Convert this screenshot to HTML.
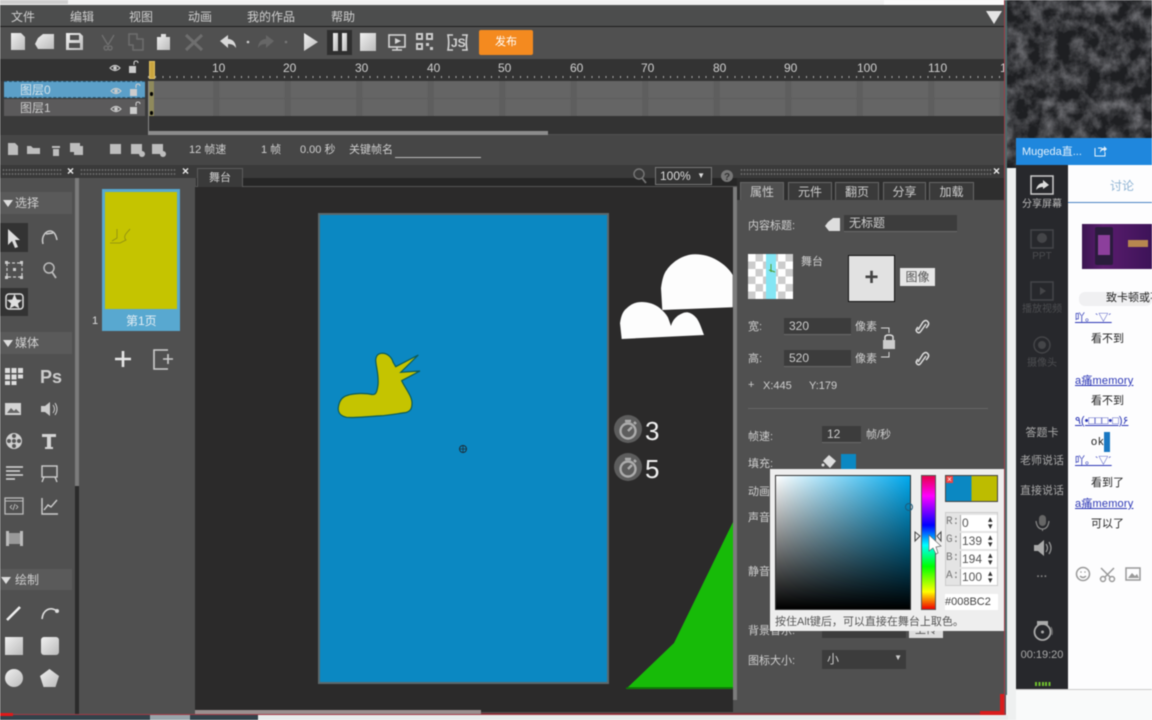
<!DOCTYPE html>
<html><head><meta charset="utf-8">
<style>
html,body{margin:0;padding:0;width:1152px;height:720px;overflow:hidden;background:#f9fafa}
#w{position:relative;width:1152px;height:720px;overflow:hidden;filter:blur(.5px);font-family:"Liberation Sans","Noto Sans CJK SC",sans-serif;font-size:12px;color:#cfcfcf}
.b{position:absolute}
.t{position:absolute;white-space:nowrap;line-height:14px}
.inp{position:absolute;background:#3c3c3c;color:#ccc;border-bottom:1px solid #6a6a6a;box-sizing:border-box;padding-left:5px;font-size:12px;line-height:16px}
.tab{position:absolute;top:182px;height:18px;border:1px solid #666;border-bottom:0;box-sizing:border-box;text-align:center;line-height:18px;font-size:12px;background:#3a3a3a;color:#ccc}
.dots{position:absolute;height:8px;background-image:radial-gradient(#6c6c6c 35%,transparent 40%);background-size:3px 4px}
.lk{color:#2a35b5;text-decoration:underline;font-size:11px}
.k{color:#222;font-size:11px}
.sd{color:#bbb;font-size:11px;text-align:center;width:60px}
.rgb{position:absolute;left:946px;width:14px;font:11px "Liberation Mono",monospace;color:#777}
.rv{position:absolute;left:960px;width:37px;height:16px;background:#fff;color:#555;font-size:12px;line-height:16px;padding-left:1px;box-sizing:border-box;border-left:1px solid #aaa}
svg{position:absolute;left:0;top:0}
</style></head><body><div id="w">

<!-- rocky bg -->
<svg width="1152" height="720" style="z-index:0"><defs><filter id="n" x="0" y="0" width="100%" height="100%"><feTurbulence type="fractalNoise" baseFrequency=".07" numOctaves="4" seed="4"/><feColorMatrix values="0 0 0 0 .42  0 0 0 0 .42  0 0 0 0 .45  1.1 0 0 0 -.38"/></filter></defs>
<rect x="1005" y="0" width="147" height="170" fill="#1e1f22"/><rect x="1005" y="0" width="147" height="170" filter="url(#n)"/></svg>

<!-- main window -->
<div class="b" style="left:0;top:0;width:1006px;height:716px;background:#505050"></div>
<div class="b" style="left:0;top:0;width:1006px;height:5px;background:#f1f1f1"></div>
<div class="b" style="left:0;top:0;width:68px;height:4px;background:#cfcfcf"></div>
<div class="b" style="left:884px;top:0;width:122px;height:5px;background:#fbfbfb"></div>
<div class="b" style="left:0;top:5px;width:1006px;height:21px;background:#4c4d4d"></div>
<div class="b" style="left:0;top:26px;width:1006px;height:1px;background:#1e1e1e"></div>
<div class="b" style="left:0;top:27px;width:1006px;height:32px;background:#505050"></div>
<div class="t" style="left:11px;top:10px">文件</div>
<div class="t" style="left:70px;top:10px">编辑</div>
<div class="t" style="left:129px;top:10px">视图</div>
<div class="t" style="left:188px;top:10px">动画</div>
<div class="t" style="left:247px;top:10px">我的作品</div>
<div class="t" style="left:331px;top:10px">帮助</div>

<!-- timeline -->
<div class="b" style="left:0;top:59px;width:1006px;height:22px;background:#333"></div>
<div class="b" style="left:148px;top:76px;width:856px;height:2px;background:repeating-linear-gradient(90deg,#aaa 0 1px,transparent 1px 7.15px)"></div>
<div class="b" style="left:0;top:81px;width:148px;height:54px;background:#3a3a3a"></div>
<div class="b" style="left:4px;top:81px;width:141px;height:17px;background:#5b9fc8;border-top:1px dashed #2b5d7b;border-bottom:1px dashed #2b5d7b;box-sizing:border-box"></div>
<div class="b" style="left:4px;top:99px;width:141px;height:17px;background:#5b5a5b"></div>
<div class="b" style="left:148px;top:81px;width:858px;height:35px;background:repeating-linear-gradient(90deg,#656565 0 65px,#5e5e5e 65px 71.5px)"></div>
<div class="b" style="left:148px;top:98px;width:858px;height:1px;background:#5d5d5d"></div>
<div class="b" style="left:148px;top:116px;width:858px;height:18px;background:#333"></div>
<div class="b" style="left:148px;top:81px;width:1px;height:54px;background:#888"></div>
<div class="b" style="left:149px;top:81px;width:5px;height:35px;background:#8f8a5c"></div>
<div class="b" style="left:149px;top:61px;width:6px;height:18px;background:#c9a53f;border:1px solid #e0c060;box-sizing:border-box"></div>
<div class="b" style="left:150px;top:92px;width:3px;height:4px;background:#000;border-radius:2px"></div>
<div class="b" style="left:150px;top:111px;width:3px;height:4px;background:#000;border-radius:2px"></div>
<div class="b" style="left:148px;top:131px;width:400px;height:4px;background:#8c8c8c"></div>
<div class="b" style="left:148px;top:135px;width:858px;height:1px;background:#3a3a3a"></div>
<div class="b" style="left:0;top:135px;width:1006px;height:30px;background:#464646"></div>
<div class="t" style="left:20px;top:83px;color:#d4e2ea">图层0</div>
<div class="t" style="left:20px;top:101px;color:#ccc">图层1</div>
<div class="t" style="left:212px;top:61px">10</div><div class="t" style="left:283px;top:61px">20</div><div class="t" style="left:355px;top:61px">30</div><div class="t" style="left:427px;top:61px">40</div><div class="t" style="left:498px;top:61px">50</div><div class="t" style="left:570px;top:61px">60</div><div class="t" style="left:641px;top:61px">70</div><div class="t" style="left:713px;top:61px">80</div><div class="t" style="left:784px;top:61px">90</div><div class="t" style="left:857px;top:61px">100</div><div class="t" style="left:928px;top:61px">110</div><div class="t" style="left:1000px;top:61px">1</div>
<div class="t" style="left:189px;top:143px;font-size:11px">12 帧速</div>
<div class="t" style="left:261px;top:143px;font-size:11px">1 帧</div>
<div class="t" style="left:300px;top:143px;font-size:11px">0.00 秒</div>
<div class="t" style="left:349px;top:143px;font-size:11px">关键帧名</div>
<div class="b" style="left:395px;top:157px;width:86px;height:1px;background:#bbb"></div>

<!-- publish -->
<div class="b" style="left:479px;top:30px;width:54px;height:25px;background:#f48a1f;border-radius:2px;text-align:center;line-height:25px;font-size:11px;color:#fff">发布</div>
<div class="b" style="left:327px;top:30px;width:25px;height:25px;background:#2f2f2f"></div>

<!-- panel headers -->
<div class="b" style="left:0;top:165px;width:1006px;height:13px;background:#3a3a3a"></div>
<div class="dots" style="left:2px;top:168px;width:60px"></div>
<div class="dots" style="left:80px;top:168px;width:96px"></div>
<div class="dots" style="left:740px;top:168px;width:252px"></div>
<div class="t" style="left:67px;top:164px;font-weight:bold;color:#eee">×</div>
<div class="t" style="left:182px;top:164px;font-weight:bold;color:#eee">×</div>
<div class="t" style="left:993px;top:164px;font-weight:bold;color:#eee">×</div>

<!-- left panels -->
<div class="b" style="left:75px;top:178px;width:4px;height:308px;background:#7c7c7c"></div>
<div class="b" style="left:75px;top:486px;width:4px;height:228px;background:#2b2b2b"></div>
<div class="b" style="left:0;top:192px;width:72px;height:22px;background:#5a5a5a"></div>
<div class="b" style="left:0;top:332px;width:72px;height:22px;background:#5a5a5a"></div>
<div class="b" style="left:0;top:569px;width:72px;height:21px;background:#5a5a5a"></div>
<div class="t" style="left:15px;top:196px">选择</div>
<div class="t" style="left:15px;top:336px">媒体</div>
<div class="t" style="left:15px;top:573px">绘制</div>
<div class="b" style="left:0;top:223px;width:28px;height:29px;background:#333"></div>
<div class="b" style="left:0;top:288px;width:28px;height:28px;background:#333"></div>

<!-- thumb -->
<div class="b" style="left:102px;top:189px;width:78px;height:142px;background:#58a8d0"></div>
<div class="b" style="left:105px;top:192px;width:72px;height:117px;background:#c5c400"></div>
<div class="t" style="left:126px;top:314px;color:#e4eef4">第1页</div>
<div class="t" style="left:92px;top:314px;font-size:11px;color:#ddd">1</div>

<!-- stage -->
<div class="b" style="left:196px;top:178px;width:541px;height:9px;background:#262626"></div>
<div class="b" style="left:195px;top:187px;width:538px;height:525px;background:#2b2a2a"></div>
<div class="b" style="left:195px;top:186px;width:542px;height:1px;background:#555"></div>
<div class="b" style="left:197px;top:168px;width:46px;height:19px;background:#3a3a3a;border:1px solid #5c5c5c;border-bottom:0;box-sizing:border-box;text-align:center;line-height:18px;font-size:11px">舞台</div>
<div class="b" style="left:318px;top:213px;width:291px;height:471px;background:#0b88c2;border:2px solid #5c686c;box-sizing:border-box"></div>
<div class="b" style="left:655px;top:167px;width:57px;height:18px;border:1px solid #777;box-sizing:border-box;background:#333;color:#ddd;font-size:12px;line-height:16px;padding-left:4px">100%<span style="position:absolute;right:6px;font-size:8px">▼</span></div>
<div class="t" style="left:645px;top:418px;font-size:26px;line-height:26px;color:#f0f0f0">3</div>
<div class="t" style="left:645px;top:456px;font-size:26px;line-height:26px;color:#f0f0f0">5</div>
<div class="b" style="left:733px;top:187px;width:4px;height:513px;background:#7c7c7c"></div>
<div class="b" style="left:195px;top:710px;width:286px;height:4px;background:#9a8f8f"></div>
<div class="b" style="left:481px;top:713px;width:525px;height:1px;background:#7c2a33"></div>

<!-- properties -->
<div class="b" style="left:737px;top:178px;width:269px;height:22px;background:#2e2e2e"></div>
<div class="tab" style="left:740px;width:44px;background:#505050">属性</div>
<div class="tab" style="left:788px;width:44px">元件</div>
<div class="tab" style="left:835px;width:44px">翻页</div>
<div class="tab" style="left:883px;width:43px">分享</div>
<div class="tab" style="left:929px;width:45px">加载</div>
<div class="t" style="left:748px;top:219px;font-size:11px">内容标题:</div>
<div class="inp" style="left:844px;top:215px;width:113px;height:17px">无标题</div>
<div class="b" style="left:748px;top:254px;width:45px;height:45px;background:#fff;background-image:conic-gradient(#ccc 25%,#fff 0 50%,#ccc 0 75%,#fff 0);background-size:15px 15px"></div>
<div class="b" style="left:766px;top:254px;width:10px;height:45px;background:#84e6f4"></div>
<div class="t" style="left:801px;top:255px;font-size:11px">舞台</div>
<div class="b" style="left:848px;top:255px;width:47px;height:47px;background:#e2e2e2;border:1px solid #111;box-sizing:border-box;text-align:center;font-size:24px;line-height:44px;font-weight:bold;color:#444">+</div>
<div class="b" style="left:900px;top:268px;width:35px;height:18px;background:#e6e6e6;color:#555;text-align:center;line-height:18px;font-size:12px">图像</div>
<div class="t" style="left:748px;top:320px;font-size:11px">宽:</div>
<div class="inp" style="left:784px;top:318px;width:67px;height:17px">320</div>
<div class="t" style="left:855px;top:320px;font-size:11px">像素</div>
<div class="t" style="left:748px;top:352px;font-size:11px">高:</div>
<div class="inp" style="left:784px;top:350px;width:67px;height:17px">520</div>
<div class="t" style="left:855px;top:352px;font-size:11px">像素</div>
<div class="t" style="left:748px;top:378px;font-size:11px">+</div>
<div class="t" style="left:763px;top:379px;font-size:11px">X:445</div>
<div class="t" style="left:809px;top:379px;font-size:11px">Y:179</div>
<div class="b" style="left:748px;top:408px;width:240px;height:1px;background:#666"></div>
<div class="t" style="left:748px;top:430px;font-size:11px">帧速:</div>
<div class="inp" style="left:822px;top:426px;width:39px;height:17px">12</div>
<div class="t" style="left:866px;top:428px;font-size:11px">帧/秒</div>
<div class="t" style="left:748px;top:457px;font-size:11px">填充:</div>
<div class="b" style="left:841px;top:454px;width:15px;height:15px;background:#0b88c2"></div>
<div class="t" style="left:748px;top:485px;font-size:11px">动画</div>
<div class="t" style="left:748px;top:511px;font-size:11px">声音</div>
<div class="t" style="left:748px;top:565px;font-size:11px">静音</div>
<div class="t" style="left:748px;top:624px;font-size:11px">背景音乐:</div>
<div class="b" style="left:822px;top:622px;width:84px;height:16px;background:#3c3c3c"></div>
<div class="b" style="left:909px;top:622px;width:34px;height:16px;background:#ddd;color:#555;font-size:11px;text-align:center;line-height:16px">上传</div>
<div class="t" style="left:748px;top:654px;font-size:11px">图标大小:</div>
<div class="inp" style="left:822px;top:650px;width:84px;height:19px;line-height:19px;border:0">小<span style="position:absolute;right:4px;font-size:8px;line-height:16px">▼</span></div>

<!-- colour picker -->
<div class="b" style="left:770px;top:469px;width:234px;height:162px;background:#eeeeee"></div>
<div class="b" style="left:775px;top:475px;width:136px;height:135px;background:linear-gradient(to top,#000,transparent),linear-gradient(to right,#fff,#00a9ee);border:1px solid #333;box-sizing:border-box"></div>
<div class="b" style="left:921px;top:475px;width:15px;height:135px;background:linear-gradient(to bottom,#e8004c,#f0f 15%,#00f 37%,#0ff 52%,#0f0 68%,#ff0 87%,#e00);border:1px solid #555;box-sizing:border-box"></div>
<div class="b" style="left:945px;top:475px;width:53px;height:27px;background:linear-gradient(90deg,#0b88c2 50%,#bdbc00 50%);border:1px solid #444;box-sizing:border-box"></div>
<div class="b" style="left:946px;top:476px;width:7px;height:7px;background:#e44;color:#fff;font-size:8px;line-height:7px;text-align:center">×</div>
<div class="b" style="left:945px;top:512px;width:53px;height:74px;background:#e4e4e4;border:1px solid #ccc;box-sizing:border-box"></div>
<div class="rgb" style="top:516px">R:</div><div class="rv" style="top:515px">0</div>
<div class="rgb" style="top:534px">G:</div><div class="rv" style="top:533px">139</div>
<div class="rgb" style="top:552px">B:</div><div class="rv" style="top:551px">194</div>
<div class="rgb" style="top:570px">A:</div><div class="rv" style="top:569px">100</div>
<div class="t" style="left:988px;top:516px;font-size:9px;color:#333;line-height:7px">▴<br>▾</div>
<div class="t" style="left:988px;top:534px;font-size:9px;color:#333;line-height:7px">▴<br>▾</div>
<div class="t" style="left:988px;top:552px;font-size:9px;color:#333;line-height:7px">▴<br>▾</div>
<div class="t" style="left:988px;top:570px;font-size:9px;color:#333;line-height:7px">▴<br>▾</div>
<div class="b" style="left:945px;top:594px;width:53px;height:16px;background:#fff;color:#444;font-size:11px;line-height:16px">#008BC2</div>
<div class="t" style="left:775px;top:615px;font-size:11px;color:#555">按住Alt键后，可以直接在舞台上取色。</div>

<!-- right edge -->
<div class="b" style="left:1004px;top:0;width:1px;height:716px;background:#a23a45"></div>
<div class="b" style="left:1005px;top:0;width:2px;height:695px;background:#4d6a6a"></div>
<div class="b" style="left:1007px;top:168px;width:9px;height:552px;background:#eef0f0"></div>
<div class="b" style="left:0;top:714px;width:1006px;height:1px;background:#a23a45"></div>
<div class="b" style="left:0;top:715px;width:258px;height:5px;background:#33424a"></div>
<div class="b" style="left:150px;top:715px;width:40px;height:5px;background:#98a4aa"></div>
<div class="b" style="left:258px;top:715px;width:750px;height:5px;background:#e8ecec"></div>
<div class="b" style="left:0;top:713px;width:13px;height:3px;background:#e21818"></div>
<div class="b" style="left:980px;top:711px;width:24px;height:4px;background:#d91c1c"></div>
<div class="b" style="left:1000px;top:694px;width:4px;height:21px;background:#d91c1c"></div>

<!-- chat -->
<div class="b" style="left:1016px;top:138px;width:136px;height:27px;background:#1f87dd"></div>
<div class="t" style="left:1022px;top:145px;font-size:11px;color:#e4f1fc">Mugeda直...</div>
<div class="b" style="left:1016px;top:165px;width:52px;height:525px;background:#27282c"></div>
<div class="b" style="left:1068px;top:165px;width:84px;height:525px;background:#fdfdfe"></div>
<div class="b" style="left:1016px;top:689px;width:136px;height:1px;background:#ccc"></div>
<div class="b" style="left:1068px;top:202px;width:84px;height:1px;background:#4a84c4"></div>
<div class="t" style="left:1110px;top:179px;color:#8fb4d4">讨论</div>
<div class="b" style="left:1082px;top:224px;width:70px;height:45px;background:linear-gradient(90deg,#3b1650,#5a1d6e 30%,#3d1358)"></div>
<div class="b" style="left:1095px;top:227px;width:18px;height:38px;background:#2a1c3c;border-radius:2px"></div>
<div class="b" style="left:1098px;top:235px;width:12px;height:20px;background:#8c3f9c"></div>
<div class="b" style="left:1128px;top:240px;width:20px;height:7px;background:#b7874f"></div>
<div class="b" style="left:1079px;top:292px;width:73px;height:14px;background:#f0f0f2;border-radius:6px"></div>
<div class="t k" style="left:1106px;top:291px">致卡顿或不</div>
<div class="t lk" style="left:1075px;top:312px;font-size:10px">吖。`▽´</div>
<div class="t k" style="left:1091px;top:332px">看不到</div>
<div class="t lk" style="left:1075px;top:374px;letter-spacing:.2px">a痛memory</div>
<div class="t k" style="left:1091px;top:394px">看不到</div>
<div class="t lk" style="left:1075px;top:414px;letter-spacing:.5px">٩(•□□□•□)۶</div>
<div class="t k" style="left:1091px;top:435px;letter-spacing:1px">ok</div>
<div class="b" style="left:1104px;top:432px;width:6px;height:20px;background:#1a78c2"></div>
<div class="t lk" style="left:1075px;top:455px;font-size:10px">吖。`▽´</div>
<div class="t k" style="left:1091px;top:476px">看到了</div>
<div class="t lk" style="left:1075px;top:497px;letter-spacing:.2px">a痛memory</div>
<div class="t k" style="left:1091px;top:517px">可以了</div>
<div class="t sd" style="left:1012px;top:198px;color:#bbb;font-size:10px">分享屏幕</div>
<div class="t sd" style="left:1012px;top:250px;color:#4c4d50;font-size:10px">PPT</div>
<div class="t sd" style="left:1012px;top:303px;color:#4c4d50;font-size:10px">播放视频</div>
<div class="t sd" style="left:1012px;top:357px;color:#4c4d50;font-size:10px">摄像头</div>
<div class="t sd" style="left:1012px;top:426px;color:#aaa">答题卡</div>
<div class="t sd" style="left:1012px;top:454px;color:#aaa">老师说话</div>
<div class="t sd" style="left:1012px;top:484px;color:#aaa">直接说话</div>
<div class="t sd" style="left:1012px;top:648px;color:#aaa">00:19:20</div>
<div class="t sd" style="left:1012px;top:570px;color:#888;font-weight:bold">···</div>
<div class="b" style="left:1035px;top:682px;width:17px;height:4px;background:repeating-linear-gradient(90deg,#6fbf2e 0 2px,#27282c 2px 3.4px)"></div>

<!-- drawn icons & shapes -->
<svg width="1152" height="720" style="z-index:5">
<defs><linearGradient id="g" x1="0" y1="0" x2="1" y2="1"><stop offset="0" stop-color="#f0f0f0"/><stop offset="1" stop-color="#bbb"/></linearGradient></defs>
<!-- corner arrow -->
<path d="M986 11H1002L994 24Z" fill="#e4e4e4"/>
<!-- toolbar -->
<g fill="url(#g)">
<path d="M11 33H21L25 37V50H11Z"/>
<path d="M38 38L43 34H54V49H38L35 44Z"/>
<path d="M66 33H80L83 36V50H66ZM70 35V40H79V35ZM69 43V48H80V43Z" fill-rule="evenodd"/>
<path d="M157 37H161V34H166V37H170V50H157Z"/>
<path d="M304 33L318 42L304 51Z"/>
<rect x="333" y="33" width="5" height="18"/><rect x="342" y="33" width="5" height="18"/>
<rect x="360" y="33" width="16" height="18"/>
</g>
<g fill="none" stroke="#6e6e6e" stroke-width="1.5">
<path d="M102 35L108 45M114 35L108 45M106 46a2 2 0 1 0 .1 0M110 46a2 2 0 1 0 .1 0"/>
<path d="M129 34H137V39H143V50H133V45H129Z"/>
<path d="M186 35L202 50M202 35L186 50" stroke-width="3"/>
</g>
<path d="M220 41L228 35V39C233 39 236 43 236 48C234 45 232 44 228 44V48Z" fill="#d8d8d8"/>
<path d="M274 41L266 35V39C261 39 258 43 258 48C260 45 262 44 266 44V48Z" fill="#666"/>
<circle cx="248" cy="42" r="1.3" fill="#ccc"/><circle cx="286" cy="42" r="1.3" fill="#777"/>
<g fill="none" stroke="#d4d4d4" stroke-width="1.6">
<rect x="389" y="35" width="16" height="12"/><path d="M397 47V50M392 50H402"/>
<path d="M453 35H448C449 40 449 45 448 50H453M462 35H467C466 40 466 45 467 50H462"/>
</g>
<path d="M395 38L401 41L395 44Z" fill="#d4d4d4"/>
<g fill="#ccc"><rect x="416" y="33" width="7" height="7"/><rect x="426" y="33" width="7" height="7"/><rect x="416" y="43" width="7" height="7"/><rect x="426" y="43" width="3" height="3"/><rect x="430" y="47" width="3" height="3"/></g>
<g fill="#444"><rect x="418" y="35" width="3" height="3"/><rect x="428" y="35" width="3" height="3"/><rect x="418" y="45" width="3" height="3"/></g>
<text x="451" y="47" font-family="Liberation Sans" font-size="12" font-weight="bold" fill="#d4d4d4">JS</text>
<!-- timeline eyes/locks -->
<g fill="none" stroke="#ccc" stroke-width="1.1">
<path d="M110 68Q115 63 120 68Q115 73 110 68Z"/><path d="M111 91Q116 86 121 91Q116 96 111 91Z"/><path d="M111 109Q116 104 121 109Q116 114 111 109Z"/>
<path d="M134 65V63Q134 61 136 61Q138 61 138 63"/><path d="M136 88V86Q136 84 138 84Q140 84 140 86"/><path d="M136 106V104Q136 102 138 102Q140 102 140 104"/>
</g>
<g fill="#ccc"><circle cx="115" cy="68" r="1.8"/><circle cx="116" cy="91" r="1.8"/><circle cx="116" cy="109" r="1.8"/>
<rect x="129" y="66" width="7" height="7"/><rect x="130" y="89" width="7" height="7"/><rect x="130" y="107" width="7" height="7"/>
</g>
<!-- bottom timeline bar icons -->
<g fill="#bdbdbd">
<path d="M8 143H15L18 146V155H8Z"/><path d="M27 146H31L33 148H40V154H27Z"/>
<path d="M52 146H60V148H52ZM53 149H59V156H53Z"/><path d="M70 143H80V146H83V155H74V152H70Z"/>
<rect x="110" y="144" width="11" height="10"/><rect x="131" y="144" width="11" height="10"/><circle cx="142" cy="154" r="3"/><rect x="152" y="144" width="11" height="10"/><circle cx="163" cy="154" r="3"/>
</g>
<!-- left tools -->
<path d="M8 229L8 245L12 241L15 248L18 247L15 240L20 240Z" fill="#ddd"/>
<path d="M43 244C41 236 46 231 50 231C54 231 56 235 57 240M46 234L53 233" fill="none" stroke="#ccc" stroke-width="1.5"/>
<rect x="7" y="263" width="15" height="14" fill="none" stroke="#ccc" stroke-width="1.2" stroke-dasharray="3 2"/>
<g fill="#ccc"><rect x="5" y="261" width="3" height="3"/><rect x="20" y="261" width="3" height="3"/><rect x="5" y="276" width="3" height="3"/><rect x="20" y="276" width="3" height="3"/><rect x="13" y="268" width="3" height="3"/></g>
<circle cx="49" cy="268" r="5" fill="none" stroke="#bbb" stroke-width="1.5"/><path d="M52 272L56 278" stroke="#bbb" stroke-width="1.8"/>
<rect x="6" y="294" width="17" height="15" rx="3" fill="none" stroke="#ddd" stroke-width="1.5"/>
<path d="M14.500 294L16.800 299.500L22 300L18 303.500L19.300 308.500L14.500 306L9.700 308.500L11 303.500L7 300L12.200 299.500Z" fill="#e0e0e0"/>
<g fill="#ddd"><rect x="5" y="368" width="5" height="5"/><rect x="11.500" y="368" width="5" height="5"/><rect x="18" y="368" width="5" height="5"/><rect x="5" y="374.500" width="5" height="5"/><rect x="11.500" y="374.500" width="5" height="5"/><rect x="18" y="374.500" width="5" height="4"/><rect x="5" y="381" width="5" height="4"/><rect x="11.500" y="381" width="5" height="4"/></g>
<text x="40" y="383" font-family="Liberation Sans" font-size="18" font-weight="bold" fill="#ccc">Ps</text>
<rect x="5" y="403" width="16" height="12" fill="#d4d4d4"/><path d="M7 413L11 408L14 411L16 409L20 413Z" fill="#666"/>
<path d="M41 406H45L50 402V416L45 412H41Z" fill="#ccc"/><path d="M53 405Q56 409 53 413M55 403Q59 409 55 415" fill="none" stroke="#ccc"/>
<circle cx="14" cy="441" r="8" fill="#d0d0d0"/><circle cx="14" cy="441" r="2" fill="#555"/><circle cx="14" cy="436" r="2" fill="#555"/><circle cx="14" cy="446" r="2" fill="#555"/><circle cx="9" cy="441" r="2" fill="#555"/><circle cx="19" cy="441" r="2" fill="#555"/>
<path d="M42 434H56V437H51V447H53V449H45V447H47V437H42Z" fill="#d4d4d4"/>
<path d="M6 467H23M6 471H20M6 475H23M6 479H15" stroke="#d8d8d8" stroke-width="1.6"/>
<rect x="42" y="466" width="15" height="11" fill="none" stroke="#ccc" stroke-width="1.4"/><path d="M44 477L42 482M55 477L57 482" stroke="#ccc" stroke-width="1.4"/>
<rect x="5" y="498" width="18" height="16" fill="none" stroke="#bbb" stroke-width="1.3"/><path d="M5 501H23" stroke="#bbb"/><path d="M10 507L12 505M10 507L12 509M18 507L16 505M18 507L16 509M15 504L13 510" stroke="#ccc" fill="none" stroke-width=".8"/>
<path d="M42 498V514H58M44 510L48 505L51 507L57 500" fill="none" stroke="#ccc" stroke-width="1.4"/>
<rect x="6" y="533" width="16" height="11" fill="#999"/><rect x="6" y="531" width="3" height="15" fill="#bbb"/><rect x="20" y="531" width="3" height="15" fill="#bbb"/>
<path d="M7 620L20 607" stroke="#eee" stroke-width="2.6"/>
<path d="M42 619C43 610 50 606 57 611" fill="none" stroke="#ddd" stroke-width="1.6"/><circle cx="57" cy="611" r="2" fill="#ddd"/>
<rect x="5" y="637" width="18" height="18" fill="url(#g)"/><rect x="41" y="637" width="18" height="18" rx="3" fill="url(#g)"/>
<circle cx="14" cy="678" r="9" fill="url(#g)"/><path d="M49.500 669L59 676L55.500 687H43.500L40 676Z" fill="url(#g)"/>
<path d="M4 200H14L9 207Z M4 340H14L9 347Z M2 577H12L7 584Z" fill="#ddd" transform="translate(-1 0)"/>
<!-- thumb duck -->
<path d="M110 243H120L126 240C122 236 128 232 130 229M117 229V238L112 241" fill="none" stroke="#8b8b14" stroke-width=".8"/>
<!-- add buttons -->
<path d="M115 359H131M123 351V367" stroke="#e6e6e6" stroke-width="2.600"/>
<path d="M168 350H154V369H168M173 359H163M168 354V364" fill="none" stroke="#ccc" stroke-width="1.600"/>
<!-- stage art -->
<path d="M381.700 353.300C388 353 392 358 393 362L395.700 366.700L418.300 355L400.700 372.300L420 371L401.700 380.700C405 388 412 396 412 403C412 408 411 411 406 412.500C395 414 385 416 376.700 416C365 417 352 418 346.700 417.300C340 416 338 412 338.300 408C339 401 342 397 347 395.500C354 393 366 393 372 394.500C376 395 377 392 378 385C379 375 376 367 375.700 360C376 356 378 353.500 381.700 353.300Z" fill="#c5c400" stroke="#0c5b58" stroke-width="1.200"/>
<circle cx="463" cy="449" r="3.500" fill="none" stroke="#1d2f3a"/><path d="M459 449H467M463 445V453" stroke="#1d2f3a" stroke-width=".8"/>
<path d="M662.300 310L661 288.300C662 280 664 273 666.700 270C673 261 684 254.300 695 254.300C703 254.300 711 256.500 716.700 260C724 264 730 270 732.700 275V307.300Z" fill="#fdfdfd"/>
<path d="M621.700 339L620 323.300C621 316 623 311 626.700 308.300C631 304 636 302 641.700 302C648 302 655 304 660 308.300C664 312 667 315 668.300 318.300L671 326C672 322 674 319 676.700 316.700C680 314 684 312.300 687.300 312.300C691 313 694 315 696.700 318.300C700 323 702 330 704 335Z" fill="#fdfdfd"/>
<path d="M626 689L674 643L733 522V689Z" fill="#17bb08"/><path d="M626 688H733" stroke="#0d6e05" stroke-width="1.500"/>
<!-- timers -->
<circle cx="628" cy="429" r="14" fill="#5d5d5d"/><circle cx="628" cy="467" r="14" fill="#5d5d5d"/>
<g fill="none" stroke="#acacac" stroke-width="2.400"><circle cx="628" cy="431" r="7.500"/><circle cx="628" cy="469" r="7.500"/><path d="M628 431L632 427M625 421H631M628 469L632 465M625 459H631M636 424L634 422M636 462L634 460"/></g>
<!-- search & help -->
<circle cx="639" cy="174" r="5" fill="none" stroke="#777" stroke-width="1.400"/><path d="M642 178L646 183" stroke="#777" stroke-width="1.800"/>
<circle cx="727" cy="176" r="6" fill="#777"/><text x="724" y="180" font-family="Liberation Sans" font-size="10" font-weight="bold" fill="#333">?</text>
<!-- props -->
<path d="M828 222L833 218H840V231H829L825 226Z" fill="#ddd"/>
<path d="M771 264V272M769 270L775 272" stroke="#4f9a2c"/>
<g fill="none" stroke="#ddd" stroke-width="1.500"><path d="M918 330L923 322Q926 319 928 322Q930 324 926 328M926 324L921 331Q919 334 917 332Q915 330 918 327"/><path d="M918 362L923 354Q926 351 928 354Q930 356 926 360M926 356L921 363Q919 366 917 364Q915 362 918 359"/>
<path d="M881 328H889V333M881 357H889V352" stroke-width="1"/><path d="M885 340V337Q885 335 889 335Q893 335 893 337V340"/></g>
<rect x="883" y="340" width="12" height="9" fill="#ccc"/>
<path d="M823 461L829 455L836 461L830 468Z" fill="#ddd"/><circle cx="823" cy="465" r="1.500" fill="#ddd"/>
<!-- picker marks -->
<circle cx="909" cy="507" r="3.500" fill="none" stroke="#1d5c7c"/>
<path d="M915 532L920 536L915 541Z" fill="none" stroke="#444"/><path d="M941 532L937 536L941 541Z" fill="none" stroke="#444"/>
<path d="M929 535V551L933 548L936 554L938 553L936 547L941 546Z" fill="#fff" stroke="#666" stroke-width=".7"/>
<!-- chat icons -->
<path d="M1095 148V156H1105V152M1098 148H1102" fill="none" stroke="#e4f1fc"/><path d="M1100 153C1100 149 1102 148 1104 148V146L1107 149L1104 152V150C1102 150 1101 151 1100 153Z" fill="#e4f1fc"/>
<rect x="1031" y="176" width="22" height="18" fill="none" stroke="#ccc" stroke-width="1.500"/><path d="M1036 190C1037 185 1040 183 1043 183V180L1049 185L1043 189V187C1040 187 1038 188 1036 190Z" fill="#ddd"/>
<rect x="1031" y="230" width="22" height="18" fill="none" stroke="#444548" stroke-width="1.500"/><circle cx="1042" cy="238" r="5" fill="#444548"/>
<rect x="1031" y="282" width="22" height="18" fill="none" stroke="#444548" stroke-width="1.500"/><path d="M1040 287L1046 291L1040 295Z" fill="#444548"/>
<circle cx="1042" cy="345" r="8" fill="none" stroke="#444548" stroke-width="1.500"/><circle cx="1042" cy="345" r="4" fill="#444548"/>
<rect x="1039" y="515" width="7" height="11" rx="3.500" fill="#666"/><path d="M1036 521Q1037 529 1042.500 529Q1048 529 1049 521M1042.500 529V531" fill="none" stroke="#888" stroke-width="1.200"/>
<path d="M1034 545H1038L1044 540V556L1038 551H1034Z" fill="#aaa"/><path d="M1046 544Q1049 548 1046 552M1049 542Q1053 548 1049 554" fill="none" stroke="#999" stroke-width="1.200"/>
<circle cx="1042.500" cy="632" r="8" fill="none" stroke="#aaa" stroke-width="1.800"/><circle cx="1042.500" cy="632" r="1.500" fill="#aaa"/><rect x="1037" y="621" width="11" height="4" fill="#aaa"/><path d="M1051 627Q1053 631 1052 635" fill="none" stroke="#777"/>
<g fill="none" stroke="#999" stroke-width="1.500"><circle cx="1083" cy="574" r="6.500"/><path d="M1080 576Q1083 579 1086 576"/><circle cx="1103" cy="579" r="2.500"/><circle cx="1112" cy="579" r="2.500"/><path d="M1101 568L1110 577M1114 568L1105 577"/><rect x="1126" y="568" width="14" height="12"/></g>
<circle cx="1081" cy="572" r=".8" fill="#999"/><circle cx="1085" cy="572" r=".8" fill="#999"/><path d="M1128 578L1132 573L1135 576L1137 574L1139 578Z" fill="#999"/>
</svg>
</div></body></html>
